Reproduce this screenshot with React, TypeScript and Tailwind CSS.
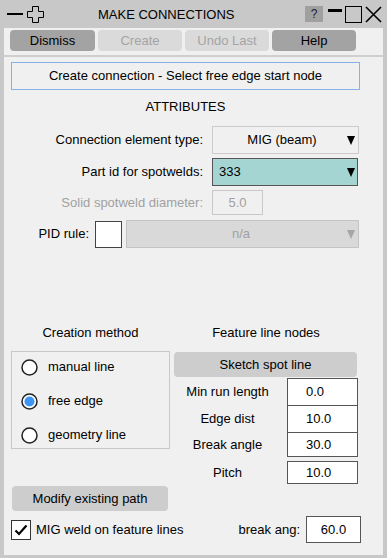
import React from 'react';

const font = { fontFamily: '"Liberation Sans", Arial, sans-serif' };

function Arrow({ color = '#000' }: { color?: string }) {
  return (
    <svg width="8" height="9" viewBox="0 0 8 9">
      <polygon points="0,0 8,0 4,9" fill={color} />
    </svg>
  );
}

function Radio({ checked, label }: { checked?: boolean; label: string }) {
  return (
    <div className="flex items-center h-[34px] shrink-0 pl-[9px]">
      <svg width="17" height="17" viewBox="0 0 17 17">
        <circle cx="8.5" cy="8.5" r="7.5" fill="#fff" stroke="#222" strokeWidth="1.5" />
        {checked && <circle cx="8.5" cy="8.5" r="5" fill="#3b95f5" />}
      </svg>
      <span className="ml-[10px]">{label}</span>
    </div>
  );
}

function Field({ label, value, h }: { label: string; value: string; h: string }) {
  return (
    <div className={`flex items-center ${h}`}>
      <span className="w-[107px] text-center">{label}</span>
      <div className={`ml-[6px] w-[71px] ${h} bg-white border border-[#555] flex items-center pl-[18px]`}>
        {value}
      </div>
    </div>
  );
}

export default function App() {
  return (
    <div
      className="w-[387px] h-[558px] bg-[#c8c8c8] flex flex-col text-[13px] text-black overflow-hidden"
      style={font}
    >
      {/* title bar */}
      <div className="h-[28px] flex items-center shrink-0">
        <div className="ml-[7px] w-[16px] h-[2px] bg-black" />
        <svg className="ml-[4px]" width="17" height="17" viewBox="0 0 17 17">
          <path
            d="M5.5 0.5h6v5h5v6h-5v5h-6v-5h-5v-6h5z"
            fill="none"
            stroke="#000"
            strokeWidth="1"
          />
        </svg>
        <span className="ml-[54px] text-[13px] leading-none">MAKE CONNECTIONS</span>
        <div className="ml-auto w-[18px] h-[16px] bg-[#a0a0a0] flex items-center justify-center text-[12px] text-[#223]">
          ?
        </div>
        <div className="ml-[5px] self-start mt-[9px] w-[14px] h-[3px] bg-black" />
        <div className="ml-[3px] w-[17px] h-[17px] border border-black" />
        <svg className="ml-[3px] mr-[5px]" width="17" height="17" viewBox="0 0 17 17">
          <path d="M1 1L16 16M16 1L1 16" stroke="#000" strokeWidth="1.6" />
        </svg>
      </div>

      {/* panel */}
      <div className="mx-[4px] h-[527px] bg-[#f0f0f0] flex flex-col">
        <div className="flex gap-[3px] pl-[6px] pt-[2px]">
          <div className="w-[85px] h-[21px] rounded-[4px] bg-[#a3a3a3] flex items-center justify-center">Dismiss</div>
          <div className="w-[84px] h-[21px] rounded-[4px] bg-[#dadada] text-[#a4a4a4] flex items-center justify-center">Create</div>
          <div className="w-[84px] h-[21px] rounded-[4px] bg-[#dadada] text-[#a4a4a4] flex items-center justify-center">Undo Last</div>
          <div className="w-[84px] h-[21px] rounded-[4px] bg-[#a3a3a3] flex items-center justify-center">Help</div>
        </div>
        <div className="mt-[4px] h-[2px] bg-[#cfcfcf]" />

        <div className="mt-[5px] ml-[7px] w-[349px] h-[28px] border border-[#86b0ea] flex items-center justify-center">
          Create connection - Select free edge start node
        </div>

        <div className="mt-[9px] h-[16px] leading-[16px] text-center pr-[16px]">ATTRIBUTES</div>

        {/* attribute rows */}
        <div className="mt-[11px] flex items-center h-[28px]">
          <span className="w-[199px] text-right">Connection element type:</span>
          <div className="ml-[9px] w-[147px] h-[28px] border border-[#cbcbcb] flex items-center">
            <span className="flex-1 text-center pl-[4px]">MIG (beam)</span>
            <span className="mr-[3px] flex"><Arrow /></span>
          </div>
        </div>
        <div className="mt-[4px] flex items-center h-[28px]">
          <span className="w-[199px] text-right">Part id for spotwelds:</span>
          <div className="ml-[9px] w-[146px] h-[28px] border border-[#555] bg-[#a4d5d3] flex items-center">
            <span className="flex-1 pl-[6px]">333</span>
            <span className="mr-[2px] flex"><Arrow /></span>
          </div>
        </div>
        <div className="mt-[4px] flex items-center h-[25px]">
          <span className="w-[199px] text-right text-[#a0a0a0]">Solid spotweld diameter:</span>
          <div className="ml-[9px] w-[51px] h-[25px] border border-[#c8c8c8] text-[#a0a0a0] flex items-center justify-center">
            5.0
          </div>
        </div>
        <div className="mt-[5px] flex items-center h-[28px]">
          <span className="w-[85px] text-right">PID rule:</span>
          <div className="ml-[6px] w-[27px] h-[27px] bg-white border border-[#444]" />
          <div className="ml-[4px] w-[233px] h-[28px] bg-[#d9d9d9] border border-[#c4c4c4] flex items-center text-[#a0a0a0]">
            <span className="flex-1 text-center pl-[8px]">n/a</span>
            <span className="mr-[3px] flex"><Arrow color="#a6a6a6" /></span>
          </div>
        </div>

        {/* lower section */}
        <div className="mt-[77px] flex">
          <div className="ml-[7px] w-[159px] flex flex-col">
            <div className="h-[16px] leading-[16px] text-center">Creation method</div>
            <div className="mt-[10px] h-[98px] border border-[#c8c8c8] flex flex-col">
              <div className="-mt-[2px]">
                <Radio label="manual line" />
              </div>
              <Radio checked label="free edge" />
              <Radio label="geometry line" />
            </div>
            <div className="mt-[37px] ml-[1px] w-[156px] h-[25px] rounded-[4px] bg-[#cdcdcd] flex items-center justify-center">
              Modify existing path
            </div>
          </div>
          <div className="ml-[4px] w-[184px] flex flex-col">
            <div className="h-[16px] leading-[16px] text-center">Feature line nodes</div>
            <div className="mt-[11px] w-[183px] h-[25px] rounded-[4px] bg-[#cdcdcd] flex items-center justify-center">
              Sketch spot line
            </div>
            <div className="mt-[1px] flex flex-col">
              <Field label="Min run length" value="0.0" h="h-[28px]" />
              <div className="-mt-[1px]"><Field label="Edge dist" value="10.0" h="h-[28px]" /></div>
              <div className="-mt-[1px]"><Field label="Break angle" value="30.0" h="h-[25px]" /></div>
              <div className="mt-[4px]"><Field label="Pitch" value="10.0" h="h-[23px]" /></div>
            </div>
          </div>
        </div>

        {/* bottom row */}
        <div className="mt-[5px] flex items-center h-[27px]">
          <div className="ml-[7px] w-[20px] h-[20px] bg-white border border-[#333] flex items-center justify-center">
            <svg width="14" height="12" viewBox="0 0 14 12">
              <path d="M1.5 6.5L5 10L12.5 1.5" fill="none" stroke="#000" strokeWidth="2.2" />
            </svg>
          </div>
          <span className="ml-[5px]">MIG weld on feature lines</span>
          <span className="ml-auto">break ang:</span>
          <div className="ml-[6px] mr-[22px] w-[55px] h-[27px] bg-white border border-[#555] flex items-center justify-center">
            60.0
          </div>
        </div>
      </div>
    </div>
  );
}
